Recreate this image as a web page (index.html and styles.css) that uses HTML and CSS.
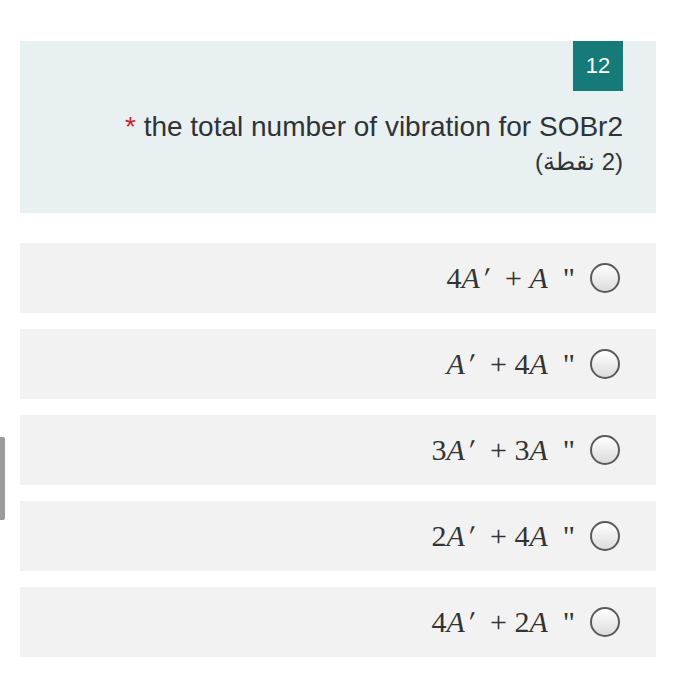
FILE: index.html
```html
<!DOCTYPE html>
<html lang="ar">
<head>
<meta charset="utf-8">
<link rel="stylesheet" href="styles.css">
</head>
<body>
<div class="scrollbar"></div>
<main class="page">
  <section class="question">
    <div class="badge-row"><span class="badge">12</span></div>
    <div class="qtext"><span class="req">*</span> the total number of vibration for SOBr2</div>
    <div class="points">(2 نقطة)</div>
  </section>
  <ul class="options">
    <li class="option"><span class="math">4<i>A</i><span class="pr">′</span> + <i>A</i> &nbsp;"</span><span class="radio"></span></li>
    <li class="option"><span class="math"><i>A</i><span class="pr">′</span> + 4<i>A</i> &nbsp;"</span><span class="radio"></span></li>
    <li class="option"><span class="math">3<i>A</i><span class="pr">′</span> + 3<i>A</i> &nbsp;"</span><span class="radio"></span></li>
    <li class="option"><span class="math">2<i>A</i><span class="pr">′</span> + 4<i>A</i> &nbsp;"</span><span class="radio"></span></li>
    <li class="option"><span class="math">4<i>A</i><span class="pr">′</span> + 2<i>A</i> &nbsp;"</span><span class="radio"></span></li>
  </ul>
</main>
</body>
</html>
```
FILE: styles.css
```css
html, body {
  margin: 0;
  padding: 0;
  background: #ffffff;
}
body {
  font-family: "Liberation Sans", Arial, sans-serif;
  color: #202124;
}
.scrollbar {
  position: fixed;
  left: 0;
  top: 437px;
  width: 5px;
  height: 83px;
  background: #9b9b9b;
  border-radius: 0 2px 2px 0;
}
.page {
  padding: 41px 25px 0 20px;
}
.question {
  background: #e8f0f2;
  height: 172px;
  box-sizing: border-box;
  padding: 0 33px 0 0;
  display: flex;
  flex-direction: column;
  align-items: flex-end;
}
.badge-row {
  display: flex;
  justify-content: flex-end;
}
.badge {
  width: 50px;
  height: 50px;
  background: #157a78;
  color: #ffffff;
  font-size: 22px;
  display: flex;
  align-items: center;
  justify-content: center;
}
.qtext {
  margin-top: 20px;
  font-size: 28px;
  line-height: 32px;
  color: #303336;
}
.req {
  color: #c5282f;
}
.points {
  direction: rtl;
  margin-top: 4px;
  font-size: 24px;
  line-height: 30px;
  color: #303336;
}
.options {
  list-style: none;
  margin: 30px 0 0 0;
  padding: 0;
  display: flex;
  flex-direction: column;
  gap: 16px;
}
.option {
  background: #f2f2f2;
  height: 70px;
  display: flex;
  align-items: center;
  justify-content: flex-end;
  padding-right: 36px;
  gap: 15px;
}
.math {
  font-family: "Liberation Serif", "Times New Roman", serif;
  font-size: 30px;
  color: #333333;
  white-space: nowrap;
}
.math i {
  font-style: italic;
}
.pr {
  display: inline-block;
  margin-left: 3px;
  margin-right: 8px;
  transform: skewX(-10deg);
}
.radio {
  width: 26px;
  height: 26px;
  border: 2px solid #5a5a5a;
  border-radius: 50%;
  background: linear-gradient(#ffffff, #dcdcdc);
  flex: none;
}
```
